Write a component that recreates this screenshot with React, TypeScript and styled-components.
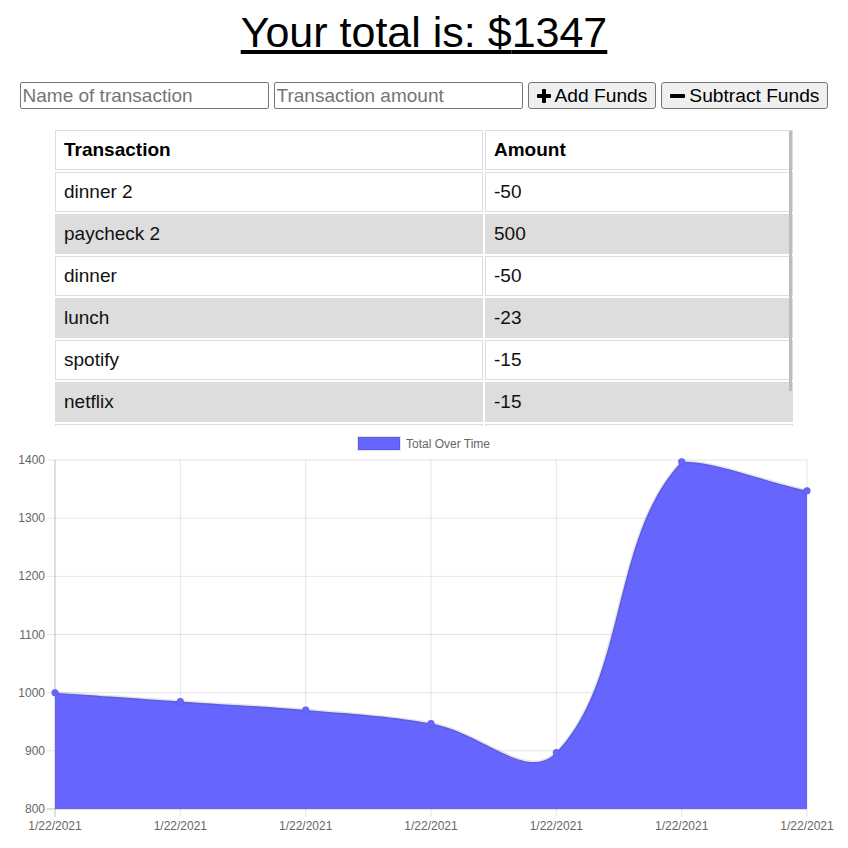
import styled, { createGlobalStyle } from "styled-components";

const GlobalStyle = createGlobalStyle`
  html, body {
    overflow: hidden;
  }
  body {
    margin: 8px;
    font-family: "Liberation Sans", Arial, sans-serif;
    color: #000;
    background: #fff;
  }
`;

type Transaction = { name: string; value: number };

// newest first, like the table
const transactions: Transaction[] = [
  { name: "dinner 2", value: -50 },
  { name: "paycheck 2", value: 500 },
  { name: "dinner", value: -50 },
  { name: "lunch", value: -23 },
  { name: "spotify", value: -15 },
  { name: "netflix", value: -15 },
  { name: "paycheck", value: 1000 },
];

const total = transactions.reduce((sum, t) => sum + t.value, 0);

// chart area, in page pixels
const area = { left: 55, right: 807, top: 460, bottom: 809 };
const yMin = 800;
const yMax = 1400;
const yTicks = [1400, 1300, 1200, 1100, 1000, 900, 800];
const fill = "#6666ff";

const yPos = (v: number) =>
  area.bottom - ((v - yMin) / (yMax - yMin)) * (area.bottom - area.top);

type Pt = { x: number; y: number };

function buildPoints(): Pt[] {
  const chrono = [...transactions].reverse();
  let running = 0;
  const values = chrono.map((t) => (running += t.value));
  const step = (area.right - area.left) / (values.length - 1);
  return values.map((v, i) => ({ x: area.left + i * step, y: yPos(v) }));
}

const clamp = (v: number, lo: number, hi: number) => Math.max(lo, Math.min(hi, v));

// same spline as chart.js 2 (tension 0.4, capped to the chart area)
function curvePath(points: Pt[], tension = 0.4) {
  const cps = points.map((cur, i) => {
    const prev = points[i - 1] || cur;
    const next = points[i + 1] || cur;
    const d01 = Math.hypot(cur.x - prev.x, cur.y - prev.y);
    const d12 = Math.hypot(next.x - cur.x, next.y - cur.y);
    const s01 = d01 / (d01 + d12) || 0;
    const s12 = d12 / (d01 + d12) || 0;
    const fa = tension * s01;
    const fb = tension * s12;
    const cap = (p: Pt) => ({
      x: clamp(p.x, area.left, area.right),
      y: clamp(p.y, area.top, area.bottom),
    });
    return {
      prev: cap({ x: cur.x - fa * (next.x - prev.x), y: cur.y - fa * (next.y - prev.y) }),
      next: cap({ x: cur.x + fb * (next.x - prev.x), y: cur.y + fb * (next.y - prev.y) }),
    };
  });
  let d = `M ${points[0].x} ${points[0].y}`;
  for (let i = 1; i < points.length; i++) {
    const a = cps[i - 1].next;
    const b = cps[i].prev;
    d += ` C ${a.x} ${a.y} ${b.x} ${b.y} ${points[i].x} ${points[i].y}`;
  }
  return d;
}

const PlusIcon = () => (
  <svg width="14" height="14" viewBox="0 0 14 14">
    <rect x="5" y="0" width="4" height="14" rx="1" fill="#000" />
    <rect x="0" y="5" width="14" height="4" rx="1" fill="#000" />
  </svg>
);

const MinusIcon = () => (
  <svg width="15" height="14" viewBox="0 0 15 14">
    <rect x="0" y="5" width="15" height="4" rx="1" fill="#000" />
  </svg>
);

function Chart() {
  const points = buildPoints();
  const line = curvePath(points);
  const area_d = `${line} L ${area.right} ${area.bottom} L ${area.left} ${area.bottom} Z`;

  return (
    <ChartSvg viewBox="8 426 832 412" width="832" height="412">
      <rect x="358" y="437" width="42" height="13" fill={fill} stroke="rgba(0,0,0,0.1)" strokeWidth="2" />
      <ChartText x="406" y="447.5">Total Over Time</ChartText>

      {yTicks.map((v) => (
        <g key={v}>
          <line
            x1={area.left - 8}
            x2={area.right}
            y1={yPos(v)}
            y2={yPos(v)}
            stroke={v === yMin ? "rgba(0,0,0,0.25)" : "rgba(0,0,0,0.1)"}
            strokeWidth="1"
          />
          <ChartText x={area.left - 10} y={yPos(v) + 4} textAnchor="end">
            {v}
          </ChartText>
        </g>
      ))}

      {points.map((p, i) => (
        <g key={i}>
          <line
            x1={p.x}
            x2={p.x}
            y1={area.top}
            y2={area.bottom + 8}
            stroke={i === 0 ? "rgba(0,0,0,0.25)" : "rgba(0,0,0,0.1)"}
            strokeWidth="1"
          />
          <ChartText x={p.x} y={830} textAnchor="middle">
            1/22/2021
          </ChartText>
        </g>
      ))}

      <path d={area_d} fill={fill} />
      <path d={line} fill="none" stroke="rgba(0,0,0,0.1)" strokeWidth="3" />
      {points.map((p, i) => (
        <circle key={i} cx={p.x} cy={p.y} r="3.5" fill={fill} stroke="rgba(0,0,0,0.08)" strokeWidth="1" />
      ))}
    </ChartSvg>
  );
}

function App() {
  return (
    <>
      <GlobalStyle />
      <Page>
        <Title>Your total is: ${total}</Title>

        <Form onSubmit={(e) => e.preventDefault()}>
          <TextInput type="text" placeholder="Name of transaction" />
          <TextInput type="number" placeholder="Transaction amount" />
          <FundsButton type="button">
            <PlusIcon />
            Add Funds
          </FundsButton>
          <FundsButton type="button">
            <MinusIcon />
            Subtract Funds
          </FundsButton>
        </Form>

        <TableArea>
          <TableWrap>
            <Table>
              <thead>
                <tr>
                  <HeadCell $wide>Transaction</HeadCell>
                  <HeadCell>Amount</HeadCell>
                </tr>
              </thead>
              <tbody>
                {transactions.map((t, i) => (
                  <tr key={i}>
                    <Cell $shaded={i % 2 === 1}>{t.name}</Cell>
                    <Cell $shaded={i % 2 === 1}>{t.value}</Cell>
                  </tr>
                ))}
              </tbody>
            </Table>
          </TableWrap>
          <ScrollThumb />
        </TableArea>

        <Chart />
      </Page>
    </>
  );
}

const Page = styled.main`
  text-align: center;
`;

const Title = styled.h1`
  margin: 0;
  font-size: 43px;
  font-weight: normal;
  line-height: normal;
  text-decoration: underline;
`;

const Form = styled.form`
  display: flex;
  justify-content: center;
  gap: 5px;
  margin-top: 25px;
`;

const TextInput = styled.input`
  box-sizing: border-box;
  width: 249px;
  height: 27px;
  padding: 1px 2px;
  border: 1px solid #767676;
  border-radius: 2px;
  font-family: "Liberation Sans", Arial, sans-serif;
  font-size: 19px;
  color: #000;
  -moz-appearance: textfield;

  &::placeholder {
    color: #757575;
  }

  &::-webkit-outer-spin-button,
  &::-webkit-inner-spin-button {
    -webkit-appearance: none;
    margin: 0;
  }
`;

const FundsButton = styled.button`
  box-sizing: border-box;
  height: 27px;
  display: inline-flex;
  align-items: center;
  gap: 4px;
  padding: 0 8px;
  background: #efefef;
  border: 1px solid #767676;
  border-radius: 3px;
  font-family: "Liberation Sans", Arial, sans-serif;
  font-size: 19.2px;
  color: #000;
  cursor: pointer;
`;

const TableArea = styled.div`
  position: relative;
  width: 742px;
  margin: 19px auto 0;
`;

const TableWrap = styled.div`
  max-height: 298px;
  overflow-y: auto;
  scrollbar-width: none;

  &::-webkit-scrollbar {
    width: 0;
  }
`;

// the thin overlay scrollbar thumb sitting on top of the table
const ScrollThumb = styled.div`
  position: absolute;
  top: 3px;
  right: 3px;
  width: 3px;
  height: 260px;
  background: #bdbdbd;
`;

const Table = styled.table`
  width: 100%;
  table-layout: fixed;
  border-collapse: separate;
  border-spacing: 2px;
  text-align: left;
  font-size: 19px;
`;

const HeadCell = styled.th<{ $wide?: boolean }>`
  box-sizing: border-box;
  width: ${(p) => (p.$wide ? "428px" : "auto")};
  height: 40px;
  padding: 8px;
  border: 1px solid #ddd;
  font-weight: bold;
  line-height: 22px;
`;

const Cell = styled.td<{ $shaded?: boolean }>`
  box-sizing: border-box;
  height: 40px;
  padding: 8px;
  border: 1px solid #ddd;
  background: ${(p) => (p.$shaded ? "#dddddd" : "#fff")};
  color: #111;
  line-height: 22px;
`;

const ChartSvg = styled.svg`
  display: block;
`;

const ChartText = styled.text`
  font-family: "Liberation Sans", Arial, sans-serif;
  font-size: 12px;
  fill: #666;
`;

export default App;
